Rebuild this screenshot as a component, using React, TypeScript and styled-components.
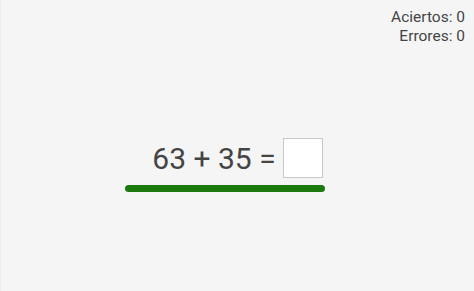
import React from "react";
import styled, { createGlobalStyle } from "styled-components";

const Global = createGlobalStyle`
  html, body { margin: 0; padding: 0; background: #f5f5f5; }
  body { font-family: Roboto, "Liberation Sans", sans-serif; color: #444; }
`;

const Page = styled.div`
  width: 474px;
  height: 291px;
  box-sizing: border-box;
  display: flex;
  flex-direction: column;
  background: #f5f5f5;
  border-left: 1px solid #ececec;
`;

const Score = styled.div`
  display: flex;
  flex-direction: column;
  align-items: flex-end;
  padding: 8px 9px 0 0;
  font-size: 15.5px;
  line-height: 19px;
  color: #444;
`;

const Stage = styled.div`
  display: flex;
  justify-content: center;
  padding-top: 92px;
`;

const Game = styled.div`
  width: 226px;
  display: flex;
  flex-direction: column;
  align-items: center;
`;

const Equation = styled.div`
  display: flex;
  align-items: center;
  font-size: 30px;
  color: #444;
`;

const Answer = styled.div`
  width: 38px;
  height: 38px;
  margin-left: 7px;
  border: 1px solid #c8c8c8;
  background: #fff;
`;

const Bar = styled.div`
  align-self: flex-start;
  width: 200px;
  height: 7px;
  margin-top: 7px;
  border-radius: 4px;
  background: #1b7a0e;
`;

export default function App() {
  return (
    <>
      <Global />
      <Page>
        <Score>
          <span>Aciertos: 0</span>
          <span>Errores: 0</span>
        </Score>
        <Stage>
          <Game>
            <Equation>
              <span>63 + 35 =</span>
              <Answer />
            </Equation>
            <Bar />
          </Game>
        </Stage>
      </Page>
    </>
  );
}
